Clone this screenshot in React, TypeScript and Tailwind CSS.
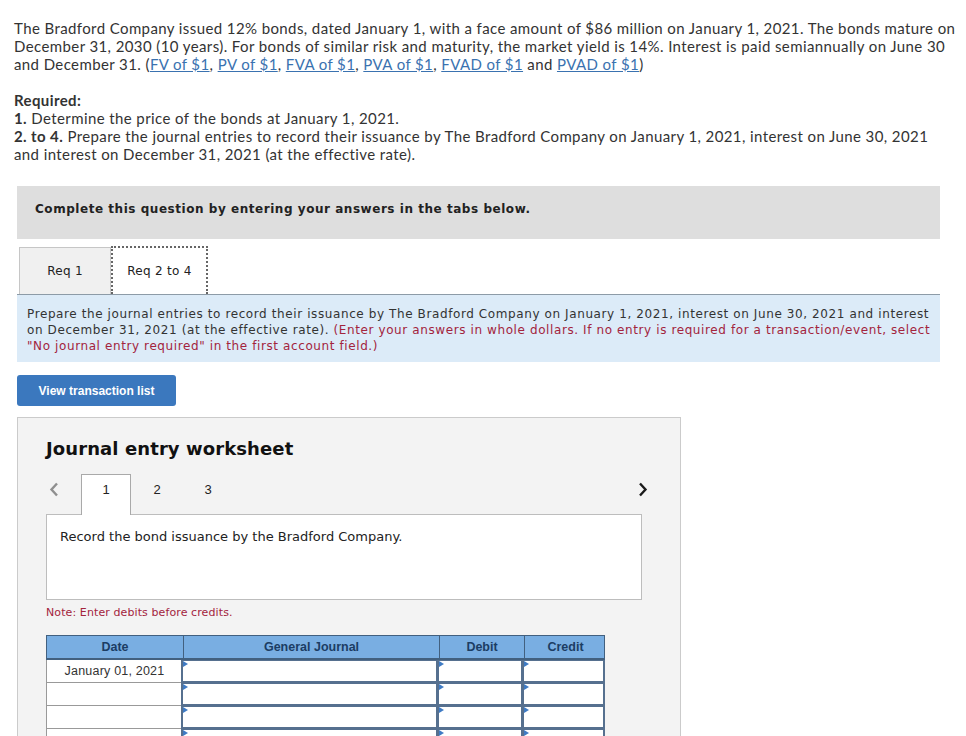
import React from "react";

const links = ["FV of $1", "PV of $1", "FVA of $1", "PVA of $1", "FVAD of $1"];

const InputCell = () => (
  <div className="relative -ml-px h-[23px] border-x-2 border-b-2 border-t border-[#56708f] bg-white">
    <span className="absolute left-0 top-0 h-0 w-0 border-y-[3px] border-l-[5px] border-y-transparent border-l-[#3f7bc4]" />
  </div>
);

const JournalRow = ({ date }: { date?: string }) => (
  <div className="grid grid-cols-[136px_256px_85px_82px]">
    <div className="flex h-[23px] items-center justify-center border-b border-l border-[#999999] bg-white text-[12.5px] tracking-[0.2px] text-[#333]">
      {date}
    </div>
    <InputCell />
    <InputCell />
    <InputCell />
  </div>
);

export default function App() {
  return (
    <div className="relative h-screen w-full overflow-hidden bg-white">
      {/* question text */}
      <div className="whitespace-nowrap px-[14px] pt-[19px] font-['Lato',sans-serif] text-[15px] leading-[18px] tracking-[0.4px] text-[#333]">
        <p>
          The Bradford Company issued 12% bonds, dated January 1, with a face amount of $86 million on January 1, 2021. The bonds mature on
          <br />
          December 31, 2030 (10 years). For bonds of similar risk and maturity, the market yield is 14%. Interest is paid semiannually on June 30
          <br />
          and December 31. (
          {links.map((l, i) => (
            <React.Fragment key={l}>
              <a className="text-[#3a72b0] underline">{l}</a>
              {i < links.length - 1 ? ", " : ""}
            </React.Fragment>
          ))}{" "}
          and <a className="text-[#3a72b0] underline">PVAD of $1</a>)
        </p>
        <p className="mt-[18px]">
          <b>Required:</b>
          <br />
          <b>1.</b> Determine the price of the bonds at January 1, 2021.
          <br />
          <b>2. to 4.</b> Prepare the journal entries to record their issuance by The Bradford Company on January 1, 2021, interest on June 30, 2021
          <br />
          and interest on December 31, 2021 (at the effective rate).
        </p>
      </div>

      <div className="ml-[17px] w-[923px] font-['DejaVu_Sans','Verdana',sans-serif]">
        {/* banner */}
        <div className="mt-[23px] h-[53px] bg-[#dedede] pl-[18px] pt-[15px] text-[12px] font-bold leading-[16px] tracking-[0.54px] text-[#222]">
          Complete this question by entering your answers in the tabs below.
        </div>

        {/* tabs */}
        <div className="mt-[7px] flex items-end border-b border-[#8d9ba7] text-[12px] tracking-[0.3px] text-[#222]">
          <div className="ml-[2px] flex h-[47px] w-[92px] items-center justify-center border border-b-0 border-[#c6c6c6] bg-[#f0f0f0]">
            Req 1
          </div>
          <div className="flex h-[48px] w-[97px] items-center justify-center border-2 border-b-0 border-dotted border-[#666] bg-white">
            Req 2 to 4
          </div>
        </div>

        {/* instructions */}
        <div className="h-[67px] whitespace-nowrap bg-[#dcebf8] pl-[10px] pt-[11px] text-[12px] leading-[16px] tracking-[0.6px] text-[#333]">
          Prepare the journal entries to record their issuance by The Bradford Company on January 1, 2021, interest on June 30, 2021 and interest
          <br />
          on December 31, 2021 (at the effective rate).{" "}
          <span className="text-[#a3243d]">
            (Enter your answers in whole dollars. If no entry is required for a transaction/event, select
            <br />
            "No journal entry required" in the first account field.)
          </span>
        </div>

        <button className="mt-[13px] flex h-[31px] w-[159px] items-center justify-center rounded-[3px] bg-[#3b78be] font-['Liberation_Sans',Arial,sans-serif] text-[12px] font-bold text-white">
          View transaction list
        </button>
      </div>

      {/* worksheet */}
      <div className="ml-[17px] mt-[11px] h-[400px] w-[664px] border border-[#cbcbcb] bg-[#f3f3f3] pl-[28px] pt-[20px]">
        <h2 className="font-['DejaVu_Sans','Verdana',sans-serif] text-[18px] font-bold leading-[22px] tracking-[0.1px] text-[#111]">
          Journal entry worksheet
        </h2>

        <div className="mt-[14px] flex h-[40px] w-[602px] font-['Liberation_Sans',Arial,sans-serif] text-[13px] leading-[16px] text-[#222]">
          <div className="flex w-[35px] items-start pl-[3px] pt-[8px]">
            <svg width="10" height="15" viewBox="0 0 10 15">
              <polyline points="8,1.5 2.5,7.5 8,13.5" fill="none" stroke="#8f8f8f" strokeWidth="2.4" />
            </svg>
          </div>
          <div className="relative z-10 -mb-px w-[50px] border border-b-0 border-[#a9a9a9] bg-white pt-[7px] text-center">
            1
          </div>
          <div className="w-[52px] pt-[8px] text-center">2</div>
          <div className="w-[50px] pt-[8px] text-center">3</div>
          <div className="flex flex-1 justify-end pt-[8px]">
            <svg width="10" height="15" viewBox="0 0 10 15">
              <polyline points="2,1.5 7.5,7.5 2,13.5" fill="none" stroke="#1a1a1a" strokeWidth="2.4" />
            </svg>
          </div>
        </div>

        <div className="h-[86px] w-[596px] border border-[#bdbdbd] bg-white pl-[13px] pt-[14px] font-['DejaVu_Sans','Verdana',sans-serif] text-[13px] leading-[16px] text-[#222]">
          Record the bond issuance by the Bradford Company.
        </div>

        <p className="mt-[6px] font-['DejaVu_Sans','Verdana',sans-serif] text-[11px] leading-[14px] tracking-[0.1px] text-[#a3243d]">
          Note: Enter debits before credits.
        </p>

        {/* journal table */}
        <div className="mt-[15px] w-[559px] font-['Liberation_Sans',Arial,sans-serif]">
          <div className="grid h-[25px] grid-cols-[136px_256px_85px_82px] border border-b-2 border-[#42607f] bg-[#79aee2] text-[12.5px] font-bold text-[#1c3d64]">
            <div className="flex items-center justify-center">Date</div>
            <div className="flex items-center justify-center border-l border-[#42607f]">General Journal</div>
            <div className="flex items-center justify-center border-l border-[#42607f]">Debit</div>
            <div className="flex items-center justify-center border-l border-[#42607f]">Credit</div>
          </div>
          <JournalRow date="January 01, 2021" />
          <JournalRow />
          <JournalRow />
          <JournalRow />
          <JournalRow />
        </div>
      </div>
    </div>
  );
}
